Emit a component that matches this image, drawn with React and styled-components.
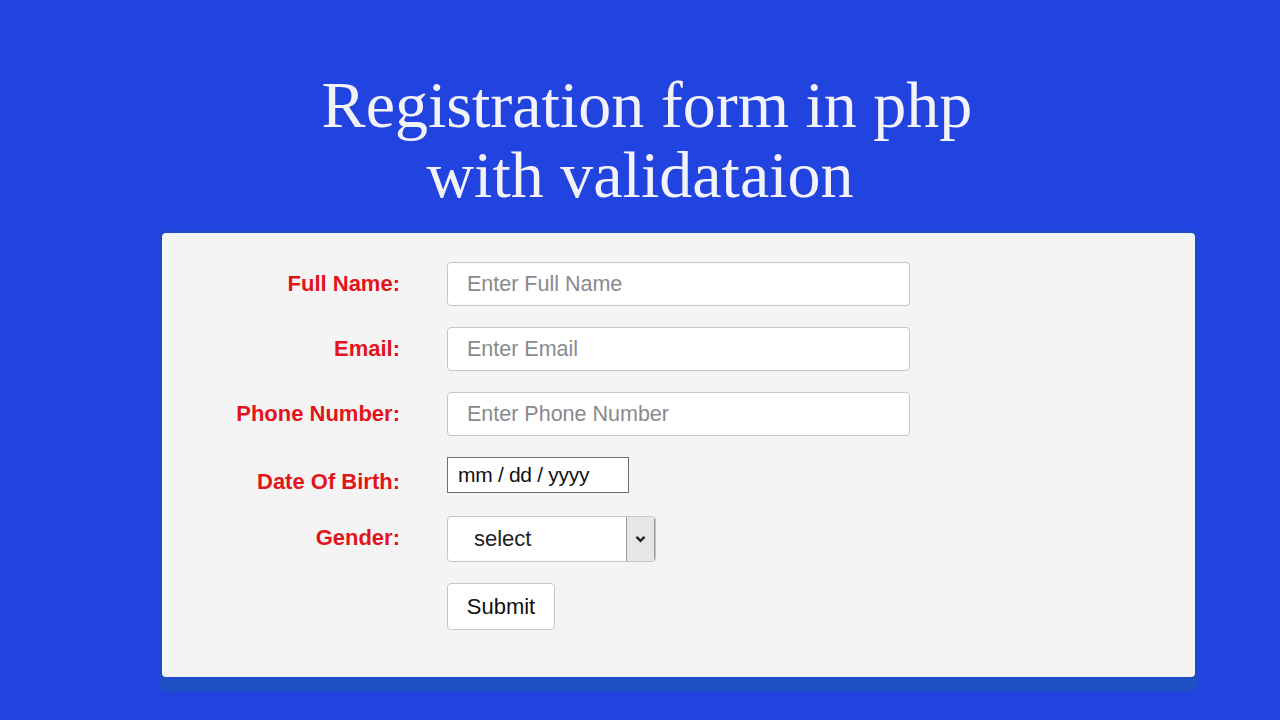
import React from 'react'
import styled, { createGlobalStyle } from 'styled-components'

const GlobalStyle = createGlobalStyle`
	html, body {
		margin: 0;
		padding: 0;
		background: #2144e0;
	}
	body {
		font-family: "Liberation Sans", Arial, sans-serif;
	}
`

// styled components
const Page = styled.div`
	width: 1280px;
	height: 720px;
	background: #2144e0;
	display: flex;
	flex-direction: column;
	align-items: center;
	overflow: hidden;
`

const Title = styled.h1`
	margin: 70px 0 0 0;
	font-family: "Liberation Serif", "Times New Roman", serif;
	font-weight: normal;
	font-size: 66px;
	line-height: 70px;
	text-indent: 14px;
	color: #f2f2f8;
	text-align: center;
`

const Card = styled.div`
	box-sizing: border-box;
	align-self: flex-start;
	width: 1033px;
	margin: 23px 0 0 162px;
	padding: 29px 0 47px 0;
	background: #f4f4f4;
	border-radius: 4px;
	box-shadow: 0 0 0 2px #1d4bc6, 0 13px 0 2px #1e50c4;
	display: grid;
	grid-template-columns: 238px 463px;
	column-gap: 47px;
	row-gap: 21px;
	align-items: center;
`

const Label = styled.label`
	justify-self: end;
	padding-top: ${(p) => p.$drop || 0}px;
	margin-bottom: -${(p) => p.$drop || 0}px;
	font-weight: bold;
	font-size: 22px;
	color: #e3141c;
`

const TextInput = styled.input`
	box-sizing: border-box;
	width: 463px;
	height: 44px;
	padding: 0 19px;
	border: 1px solid #c6c6c6;
	border-radius: 4px;
	background: #fff;
	font-family: "Liberation Sans", Arial, sans-serif;
	font-size: 21.5px;
	outline: none;

	&::placeholder {
		color: #8a8a8e;
	}
`

const DateBox = styled.div`
	box-sizing: border-box;
	width: 182px;
	height: 36px;
	padding: 0 10px;
	border: 1px solid #707070;
	background: #fff;
	display: flex;
	align-items: center;
	font-size: 21px;
	letter-spacing: -0.3px;
	color: #111;
`

const SelectBox = styled.div`
	box-sizing: border-box;
	width: 209px;
	height: 46px;
	margin-top: 2px;
	border: 1px solid #c6c6c6;
	border-radius: 4px;
	background: #fff;
	display: flex;
	align-items: stretch;
	overflow: hidden;
`

const SelectText = styled.span`
	flex: 1;
	display: flex;
	align-items: center;
	padding-left: 26px;
	font-size: 22px;
	color: #222;
`

const SelectArrow = styled.span`
	width: 27px;
	display: flex;
	align-items: center;
	justify-content: center;
	background: #e6e6e6;
	border-left: 1px solid #9a9a9a;
	border-right: 1px solid #9a9a9a;
`

const SubmitButton = styled.button`
	box-sizing: border-box;
	width: 108px;
	height: 47px;
	border: 1px solid #c6c6c6;
	border-radius: 4px;
	background: #fff;
	font-family: "Liberation Sans", Arial, sans-serif;
	font-size: 22px;
	color: #111;
`

const fields = [
	{ label: 'Full Name:', placeholder: 'Enter Full Name' },
	{ label: 'Email:', placeholder: 'Enter Email' },
	{ label: 'Phone Number:', placeholder: 'Enter Phone Number' },
]

const App = () => (
	<Page>
		<GlobalStyle />
		<Title>
			Registration form in php
			<br />
			with validataion
		</Title>
		<Card>
			{fields.map((f) => (
				<React.Fragment key={f.label}>
					<Label>{f.label}</Label>
					<TextInput placeholder={f.placeholder} />
				</React.Fragment>
			))}

			<Label $drop={7}>Date Of Birth:</Label>
			<DateBox>mm / dd / yyyy</DateBox>

			<Label>Gender:</Label>
			<SelectBox>
				<SelectText>select</SelectText>
				<SelectArrow>
					<svg width="11" height="8" viewBox="0 0 11 8">
						<path d="M1.5 1.8 L5.5 5.8 L9.5 1.8" fill="none" stroke="#222" strokeWidth="2.4" />
					</svg>
				</SelectArrow>
			</SelectBox>

			<span />
			<div>
				<SubmitButton>Submit</SubmitButton>
			</div>
		</Card>
	</Page>
)

export default App
